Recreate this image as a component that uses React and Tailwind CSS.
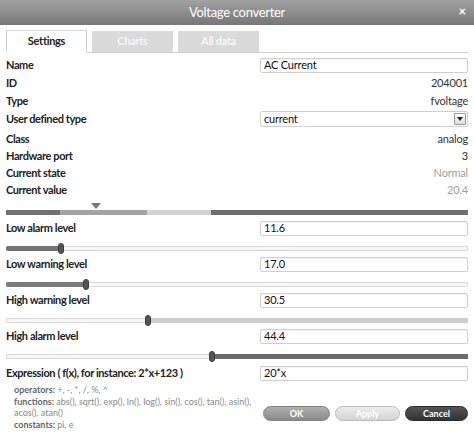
import { useState } from "react";

const font = { fontFamily: "Lato, 'Open Sans', 'Liberation Sans', sans-serif" };

function InfoRow({ label, value, muted, className = "h-[17px]" }) {
  return (
    <div className={`flex items-center justify-between ${className}`}>
      <span className="font-bold text-[11px] tracking-[-0.4px] text-[#222]">{label}</span>
      <span className={`text-[11px] tracking-[-0.2px] ${muted ? "text-[#a0a0a0]" : "text-[#333]"}`}>{value}</span>
    </div>
  );
}

function TextBox({ value }) {
  return (
    <div className="w-[208px] h-[15px] border border-[#cfcfcf] rounded-[2px] bg-white flex items-center pl-[3px] text-[11px] tracking-[-0.2px] text-[#111] shadow-[inset_0_1px_1px_rgba(0,0,0,0.05)]">
      {value}
    </div>
  );
}

function LevelRow({ label, value }) {
  return (
    <div className="flex items-center justify-between h-[15px]">
      <span className="font-bold text-[11px] tracking-[-0.4px] text-[#222]">{label}</span>
      <TextBox value={value} />
    </div>
  );
}

// thin track with a knob; fill runs either left of the knob or right of it
function Slider({ pos, fill, side }) {
  return (
    <div className="h-[21px] pt-[3px] flex items-center">
      <div className="relative w-full h-[5px] border border-[#d8d8d8] bg-[#f7f7f7] rounded-[1px]">
        {side === "left" ? (
          <div className="absolute left-[-1px] top-[-1px] h-[5px] rounded-l-[2px]" style={{ width: pos, background: fill }} />
        ) : (
          <div className="absolute right-[-1px] top-[-1px] h-[5px]" style={{ left: pos, background: fill }} />
        )}
        <div
          className="absolute top-[-4px] w-[6px] h-[11px] rounded-[3px] bg-[#555] border border-[#3c3c3c]"
          style={{ left: pos - 3 }}
        />
      </div>
    </div>
  );
}

export default function App() {
  const [tab, setTab] = useState("Settings");
  const tabs = ["Settings", "Charts", "All data"];

  return (
    <div className="w-[474px] h-[432px] bg-white overflow-hidden" style={font}>
      {/* header */}
      <div className="h-[25px] bg-gradient-to-b from-[#a2a2a2] to-[#777777] flex items-center justify-center relative">
        <span className="text-white text-[13px] tracking-[-0.3px]">Voltage converter</span>
        <span className="absolute right-[8px] top-[5px] text-white text-[13px] font-bold leading-none">×</span>
      </div>

      {/* tabs */}
      <div className="pt-[5px] px-[6px]">
        <div className="flex items-end gap-[5px] border-b border-[#d0d0d0] h-[23px]">
          {tabs.map((t) =>
            t === tab ? (
              <button
                key={t}
                onClick={() => setTab(t)}
                className="w-[81px] h-[23px] mb-[-1px] bg-white border border-[#d0d0d0] border-b-white text-[11px] font-bold tracking-[-0.3px] text-[#222]"
              >
                {t}
              </button>
            ) : (
              <button
                key={t}
                onClick={() => setTab(t)}
                className="w-[81px] h-[21px] bg-[#dadada] text-[11px] font-bold tracking-[-0.3px] text-[#f6f6f6]"
              >
                {t}
              </button>
            )
          )}
        </div>
      </div>

      <div className="px-[6px] pt-[3px]">
        <div className="flex items-center justify-between h-[18px]">
          <span className="font-bold text-[11px] tracking-[-0.4px] text-[#222]">Name</span>
          <TextBox value="AC Current" />
        </div>
        <InfoRow label="ID" value="204001" className="h-[18px]" />
        <InfoRow label="Type" value="fvoltage" className="h-[18px]" />
        <div className="flex items-center justify-between h-[18px]">
          <span className="font-bold text-[11px] tracking-[-0.4px] text-[#222]">User defined type</span>
          <div className="w-[208px] h-[16px] border border-[#cfcfcf] rounded-[2px] bg-white flex items-center justify-between pl-[3px] pr-[1px] text-[11px] tracking-[-0.2px] text-[#111]">
            current
            <span className="w-[12px] h-[12px] border border-[#999] rounded-[1px] bg-gradient-to-b from-white to-[#ddd] flex items-center justify-center">
              <svg width="6" height="4" viewBox="0 0 6 4">
                <path d="M0 0h6L3 4z" fill="#222" />
              </svg>
            </span>
          </div>
        </div>
        <div className="h-[3px]" />
        <InfoRow label="Class" value="analog" />
        <InfoRow label="Hardware port" value="3" />
        <InfoRow label="Current state" value="Normal" muted />
        <InfoRow label="Current value" value="20.4" muted />

        {/* value scale with pointer */}
        <div className="relative h-[10px]">
          <svg className="absolute left-[85px] top-[4px]" width="10" height="6" viewBox="0 0 10 6">
            <path d="M0 0h10L5 6z" fill="#777" />
          </svg>
        </div>
        <div className="flex h-[5px] mt-[1px]">
          <div className="w-[54px] bg-[#727272]" />
          <div className="w-[87px] bg-[#a3a3a3]" />
          <div className="w-[64px] bg-[#d2d2d2]" />
          <div className="flex-1 bg-[#6e6e6e]" />
        </div>

        <div className="h-[6px]" />
        <LevelRow label="Low alarm level" value="11.6" />
        <Slider pos={54} fill="#747474" side="left" />
        <LevelRow label="Low warning level" value="17.0" />
        <Slider pos={79} fill="#7a7a7a" side="left" />
        <LevelRow label="High warning level" value="30.5" />
        <Slider pos={141} fill="#cdcdcd" side="right" />
        <LevelRow label="High alarm level" value="44.4" />
        <Slider pos={205} fill="#6b6b6b" side="right" />

        <div className="mt-[1px]">
          <LevelRow label="Expression ( f(x), for instance: 2*x+123 )" value="20*x" />
        </div>

        <div className="flex justify-between mt-[3px]">
          <div className="pl-[8px] w-[254px] text-[9px] leading-[11.5px] text-[#8a8a8a]">
            <div><b className="text-[#666]">operators:</b> +, -, *, /, %, ^</div>
            <div>
              <b className="text-[#666]">functions:</b> abs(), sqrt(), exp(), ln(), log(), sin(), cos(), tan(), asin(), acos(), atan()
            </div>
            <div><b className="text-[#666]">constants:</b> pi, e</div>
          </div>
          <div className="flex gap-[5px] items-start pt-[22px]">
            <button className="w-[67px] h-[15px] rounded-full bg-gradient-to-b from-[#b0b0b0] to-[#8a8a8a] border border-[#808080] text-white text-[9px] font-bold leading-none">OK</button>
            <button className="w-[65px] h-[15px] rounded-full bg-gradient-to-b from-[#ececec] to-[#d4d4d4] border border-[#bdbdbd] text-white text-[9px] font-bold leading-none">Apply</button>
            <button className="w-[63px] h-[15px] rounded-full bg-gradient-to-b from-[#555] to-[#333] border border-[#2a2a2a] text-white text-[9px] font-bold leading-none">Cancel</button>
          </div>
        </div>
      </div>
    </div>
  );
}
